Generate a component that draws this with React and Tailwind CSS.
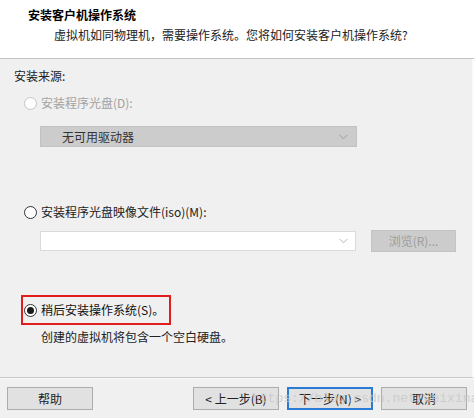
import React from "react";

const font = { fontFamily: '"Noto Sans CJK SC", "Noto Sans", sans-serif' };

function Radio({ checked, disabled }) {
  return (
    <span
      className={`w-[13px] h-[13px] rounded-full border bg-white flex items-center justify-center shrink-0 ${
        disabled ? "border-[#c4c4c4]" : "border-[#333333]"
      }`}
    >
      {checked && <span className="w-[7px] h-[7px] rounded-full bg-[#1a1a1a]" />}
    </span>
  );
}

function Chevron({ color = "#a8a8a8" }) {
  return (
    <svg width="9" height="6" viewBox="0 0 9 6" fill="none">
      <path d="M0.5 0.8 L4.5 4.8 L8.5 0.8" stroke={color} strokeWidth="1" />
    </svg>
  );
}

function Btn({ children, primary }) {
  return (
    <button
      className={`h-[23px] w-[86px] bg-[#e1e1e1] text-[12px] leading-none text-[#222] flex items-center justify-center ${
        primary ? "border-2 border-[#2a7bd4]" : "border border-[#adadad]"
      }`}
    >
      {children}
    </button>
  );
}

export default function App() {
  return (
    <div className="w-[474px] h-[418px] bg-[#f0f0f0] flex flex-col relative overflow-hidden" style={font}>
      {/* header */}
      <div className="h-[59px] bg-white border-b border-[#c3c3c3] pl-[28px] pt-[7px] shrink-0">
        <div className="text-[12px] leading-[16px] font-bold text-black">安装客户机操作系统</div>
        <div className="text-[12px] leading-[16px] text-[#222] ml-[26px] mt-[4px]">
          虚拟机如同物理机，需要操作系统。您将如何安装客户机操作系统?
        </div>
      </div>

      {/* body */}
      <div className="h-[319px] flex flex-col shrink-0 border-r-2 border-[#fbfbfb] border-b border-b-[#c8c8c8]">
        <div className="mt-[10px] ml-[14px] text-[12px] leading-[14px] text-[#222]">安装来源:</div>

        <div className="mt-[12px] ml-[24px] h-[16px] flex items-center gap-[4px]">
          <Radio disabled />
          <span className="text-[12px] leading-[16px] text-[#a2a2a2]">安装程序光盘(D):</span>
        </div>

        <div className="mt-[15px] ml-[40px] w-[317px] h-[21px] bg-[#cccccc] border border-[#c2c2c2] flex items-center justify-between pl-[21px] pr-[8px]">
          <span className="text-[12px] leading-none text-[#333]">无可用驱动器</span>
          <Chevron color="#9a9a9a" />
        </div>

        <div className="mt-[57px] ml-[24px] h-[16px] flex items-center gap-[4px]">
          <Radio />
          <span className="text-[12px] leading-[16px] text-[#222]">安装程序光盘映像文件(iso)(M):</span>
        </div>

        <div className="mt-[10px] ml-[40px] h-[22px] flex items-center">
          <div className="w-[316px] h-[20px] bg-white border border-[#dadada] flex items-center justify-end pr-[7px]">
            <Chevron color="#b5b5b5" />
          </div>
          <div className="ml-[15px] w-[85px] h-[22px] bg-[#cccccc] border border-[#c4c4c4] flex items-center justify-center text-[12px] leading-none text-[#9e9e9e]">
            浏览(R)...
          </div>
        </div>

        <div className="mt-[43px] ml-[21px] w-[150px] h-[30px] border-2 border-[#e01e1e] flex items-center pl-[1px] gap-[4px]">
          <Radio checked />
          <span className="text-[12px] leading-[16px] text-[#111]">稍后安装操作系统(S)。</span>
        </div>

        <div className="mt-[5px] ml-[41px] text-[12px] leading-[14px] text-[#222]">创建的虚拟机将包含一个空白硬盘。</div>
      </div>

      {/* footer */}
      <div className="flex-1 border-t border-[#fafafa] flex items-start pt-[8px] pl-[7px]">
        <Btn>帮助</Btn>
        <div className="ml-[100px] flex gap-[8px]">
          <Btn>&lt; 上一步(B)</Btn>
          <Btn primary>下一步(N) &gt;</Btn>
          <Btn>取消</Btn>
        </div>
      </div>

      <div
        className="absolute left-[252px] top-[392px] text-[13px] leading-none text-[#c9c9c9] opacity-80 whitespace-nowrap pointer-events-none"
        style={{ fontFamily: '"Liberation Mono", monospace' }}
      >
        https://blog.csdn.net/weixinaniya
      </div>
    </div>
  );
}
